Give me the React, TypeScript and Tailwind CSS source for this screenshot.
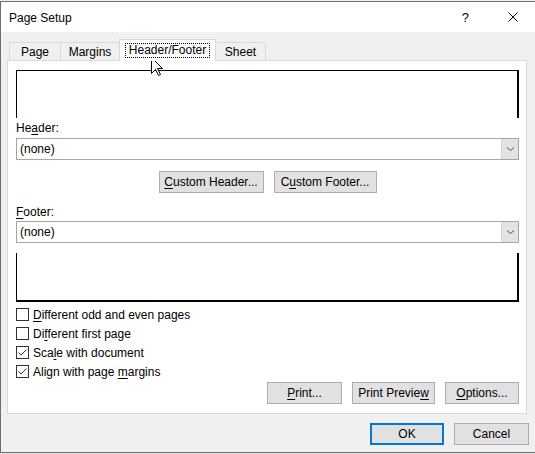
import React from 'react';

const font = { fontFamily: '"Liberation Sans", Arial, sans-serif' };

function Key({ children }: { children: React.ReactNode }) {
    return <span className="underline underline-offset-[2px] decoration-1">{children}</span>;
}

function Btn({ w, children, primary }: { w: string; children: React.ReactNode; primary?: boolean }) {
    return (
        <button type="button"
            className={`${w} h-[22px] flex items-center justify-center text-[12px] text-black bg-[#e1e1e1] ${primary ? 'border-2 border-[#0078d7]' : 'border border-[#adadad]'}`}>
            {children}
        </button>
    );
}

function Combo() {
    return (
        <div className="h-[22px] flex items-stretch border border-[#a6a6a6] bg-white">
            <div className="flex-1 flex items-center pl-[3px] text-[12px]">(none)</div>
            <div className="w-[17px] bg-[#e3e3e3] border-l border-[#d4d4d4] flex items-center justify-center">
                <svg width="9" height="6" viewBox="0 0 9 6"><path d="M1 1.5 L4.5 4.5 L8 1.5" fill="none" stroke="#505050" strokeWidth="1" /></svg>
            </div>
        </div>
    );
}

function Check({ checked, children }: { checked?: boolean; children: React.ReactNode }) {
    return (
        <div className="h-[19px] flex items-center gap-[4px]">
            <div className="w-[13px] h-[13px] border border-[#333] bg-white flex items-center justify-center">
                {checked && (
                    <svg width="11" height="11" viewBox="0 0 11 11"><path d="M1.5 5.5 L4 8 L9.5 2.5" fill="none" stroke="#333" strokeWidth="1" /></svg>
                )}
            </div>
            <span className="text-[12px]">{children}</span>
        </div>
    );
}

export default function App() {
    return (
        <div className="relative w-[535px] h-[454px] bg-[#e6e6e6] overflow-hidden text-black" style={font}>
            <div className="h-[1px] bg-[#f2f2f2]" />
            <div className="w-[545px] h-[452px] border-t border-b border-l border-[#6e6e6e] bg-[#f0f0f0] flex flex-col">
                {/* title bar */}
                <div className="h-[30px] bg-white flex items-center pl-[8px] shrink-0">
                    <span className="text-[12px] mt-[1px]">Page Setup</span>
                    <span className="ml-auto text-[13px] mr-[39px] mt-[1px]">?</span>
                    <svg className="mr-[27px]" width="10" height="10" viewBox="0 0 10 10"><path d="M0.5 0.5 L9.5 9.5 M9.5 0.5 L0.5 9.5" stroke="#000" strokeWidth="1" /></svg>
                </div>
                {/* tabs */}
                <div className="pt-[7px] pl-[6px]">
                    <div className="h-[22px] flex items-end pl-[2px] text-[12px]">
                        <div className="w-[52px] h-[19px] border-t border-l border-r border-[#d9d9d9] flex items-center justify-center">Page</div>
                        <div className="w-[59px] h-[19px] border-t border-r border-[#d9d9d9] flex items-center justify-center">Margins</div>
                        <div className="relative z-10 -ml-px w-[97px] h-[22px] bg-white border-t border-l border-r border-[#d9d9d9] flex items-start justify-center pt-[3px]">
                            <span className="px-[3px] h-[15px] leading-[13px] border border-dotted border-black">Header/Footer</span>
                        </div>
                        <div className="w-[50px] h-[19px] border-t border-r border-[#d9d9d9] flex items-center justify-center">Sheet</div>
                    </div>
                    {/* panel */}
                    <div className="-mt-px w-[520px] bg-white border border-[#d9d9d9] pl-[8px] pr-[7px] pt-[9px] pb-[9px]">
                        <div className="h-[48px] border-t border-l border-r-2 border-black" />
                        <div className="mt-[3px] h-[15px] leading-[15px] text-[12px]">He<Key>a</Key>der:</div>
                        <div className="mt-[2px]"><Combo /></div>
                        <div className="mt-[11px] flex justify-center gap-[10px]">
                            <Btn w="w-[105px]"><Key>C</Key>ustom Header...</Btn>
                            <Btn w="w-[103px]">C<Key>u</Key>stom Footer...</Btn>
                        </div>
                        <div className="mt-[12px] h-[15px] leading-[15px] text-[12px]"><Key>F</Key>ooter:</div>
                        <div className="mt-[1px]"><Combo /></div>
                        <div className="mt-[10px] h-[49px] border-l border-r-2 border-b-2 border-black" />
                        <div className="mt-[3px]">
                            <Check><Key>D</Key>ifferent odd and even pages</Check>
                            <Check>Di<Key>f</Key>ferent first page</Check>
                            <Check checked>Sca<Key>l</Key>e with document</Check>
                            <Check checked>Align with page <Key>m</Key>argins</Check>
                        </div>
                        <div className="mt-[1px] flex justify-end gap-[10px]">
                            <Btn w="w-[75px]"><Key>P</Key>rint...</Btn>
                            <Btn w="w-[83px]">Print Previe<Key>w</Key></Btn>
                            <Btn w="w-[74px]"><Key>O</Key>ptions...</Btn>
                        </div>
                    </div>
                    {/* dialog buttons */}
                    <div className="mt-[9px] w-[522px] flex justify-end gap-[10px]">
                        <Btn w="w-[74px]" primary>OK</Btn>
                        <Btn w="w-[75px]">Cancel</Btn>
                    </div>
                </div>
            </div>
            {/* mouse pointer */}
            <svg className="absolute left-[151px] top-[57px]" width="13" height="20" viewBox="0 0 13 20">
                <path d="M0.5 0.5 L0.5 16.5 L4.5 12.5 L7.5 18.5 L9.5 17.5 L6.5 11.5 L11.5 11.5 Z" fill="#fff" stroke="#000" strokeWidth="1" strokeLinejoin="miter" />
            </svg>
        </div>
    );
}
